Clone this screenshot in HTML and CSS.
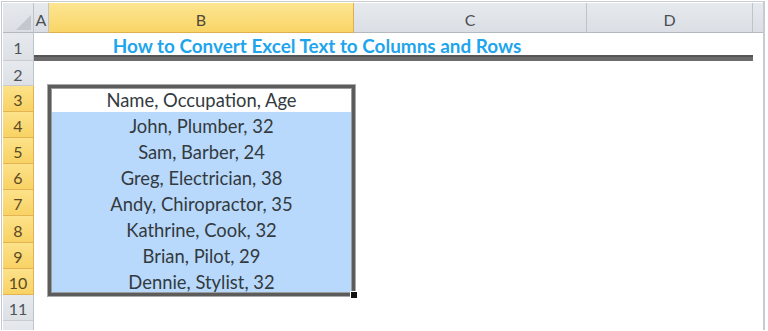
FILE: index.html
```html
<!DOCTYPE html>
<html>
<head>
<meta charset="utf-8">
<link rel="stylesheet" href="styles.css">
</head>
<body>
<div class="frame">
  <div class="sheet">
    <!-- header row -->
    <div class="hd corner"><svg width="31" height="29" viewBox="0 0 31 29"><polygon points="28,12 28,27 13,27" fill="#c3c8ce"/></svg></div>
    <div class="hd col">A</div>
    <div class="hd col sel">B</div>
    <div class="hd col">C</div>
    <div class="hd col">D</div>
    <div class="hd col last"></div>

    <!-- row 1 -->
    <div class="rh">1</div>
    <div class="c dl"></div>
    <div class="c title dl">How to Convert Excel Text to Columns and Rows</div>
    <div class="c dl"></div>
    <div class="c"></div>

    <!-- row 2 -->
    <div class="rh">2</div>
    <div class="c"></div><div class="c"></div><div class="c"></div><div class="c"></div><div class="c"></div>

    <!-- row 3 -->
    <div class="rh on">3</div>
    <div class="c"></div><div class="c txt">Name, Occupation, Age</div><div class="c"></div><div class="c"></div><div class="c"></div>

    <div class="rh on">4</div>
    <div class="c"></div><div class="c txt blue">John, Plumber, 32</div><div class="c"></div><div class="c"></div><div class="c"></div>

    <div class="rh on">5</div>
    <div class="c"></div><div class="c txt blue">Sam, Barber, 24</div><div class="c"></div><div class="c"></div><div class="c"></div>

    <div class="rh on">6</div>
    <div class="c"></div><div class="c txt blue">Greg, Electrician, 38</div><div class="c"></div><div class="c"></div><div class="c"></div>

    <div class="rh on">7</div>
    <div class="c"></div><div class="c txt blue">Andy, Chiropractor, 35</div><div class="c"></div><div class="c"></div><div class="c"></div>

    <div class="rh on">8</div>
    <div class="c"></div><div class="c txt blue">Kathrine, Cook, 32</div><div class="c"></div><div class="c"></div><div class="c"></div>

    <div class="rh on">9</div>
    <div class="c"></div><div class="c txt blue">Brian, Pilot, 29</div><div class="c"></div><div class="c"></div><div class="c"></div>

    <div class="rh on">10</div>
    <div class="c"></div><div class="c txt blue">Dennie, Stylist, 32</div><div class="c"></div><div class="c"></div><div class="c"></div>

    <div class="rh">11</div>
    <div class="c"></div><div class="c"></div><div class="c"></div><div class="c"></div><div class="c"></div>

    <div class="rh"></div>
    <div class="c"></div><div class="c"></div><div class="c"></div><div class="c"></div><div class="c"></div>

    <div class="selection"><span class="handle"></span></div>
  </div>
</div>
</body>
</html>
```

FILE: styles.css
```css
* { box-sizing: border-box; }
html, body { margin: 0; padding: 0; background: #ffffff; }
body { width: 768px; height: 331px; overflow: hidden; }

.frame {
  margin: 1px 0 0 1px;
  padding: 1px 0 0 1px;
  border-top: 1px solid #c9cdd3;
  border-left: 1px solid #c4c8ce;
  width: 764px;
  height: 329px;
  overflow: hidden;
  border-right: 2px solid #c7cbd1;
}

.sheet {
  position: relative;
  display: grid;
  grid-template-columns: 31px 15px 305px 233px 166px 10px;
  grid-template-rows: 30px 28px 25px repeat(9, 26.1px) 20px;
  font-family: Lato, "Open Sans", sans-serif;
}

.hd {
  background: linear-gradient(#e6e9ed, #dbdfe5);
  border-right: 1px solid #bfc4ca;
  border-bottom: 1px solid #b4b9c0;
  color: #4b4f55;
  font-size: 16px;
  display: flex;
  align-items: center;
  justify-content: center;
  padding-top: 3px;
}
.hd.corner { padding: 0; display: block; }
.hd.corner svg { display: block; }
.hd.sel {
  background: linear-gradient(#fde592, #f9d566);
  border-right-color: #e0b04c;
  border-bottom-color: #e0b04c;
  color: #50493a;
}
.hd.last { border-right: none; }

.rh {
  background: linear-gradient(#e6e9ed, #dde1e6);
  border-right: 1px solid #bfc4ca;
  border-bottom: 1px solid #c8ccd2;
  color: #4e535a;
  font-size: 16px;
  display: flex;
  align-items: center;
  justify-content: center;
  padding-top: 2px;
}
.rh.on {
  background: linear-gradient(#fde28a, #f8d264);
  border-right-color: #dfb14f;
  border-bottom-color: #e2b453;
  color: #5a4a25;
}

.c { background: #ffffff; }
.dl { border-bottom: 4px solid #6b6b6b; box-shadow: inset 0 -2px 0 #555; }

.title {
  grid-column: span 2;
  color: #1ea5ec;
  font-weight: bold;
  font-size: 18.9px;
  line-height: 22px;
  text-align: center;
  padding-top: 2px;
  padding-right: 2px;
  white-space: nowrap;
}

.txt {
  color: #333a40;
  font-size: 18.4px;
  text-align: center;
  display: flex;
  align-items: center;
  justify-content: center;
  padding-top: 1px;
  white-space: nowrap;
}
.blue { background: #b8d9fb; }

.selection {
  position: absolute;
  grid-column: 3 / 4;
  grid-row: 4 / 12;
  left: -1px;
  right: -1px;
  top: -1px;
  bottom: -1px;
  border: 3px solid #5c5c5c;
  outline: 1px solid #a9a9a9;
  box-shadow: inset 0 0 0 1px #9c9c9c;
}
.handle {
  position: absolute;
  right: -5px;
  bottom: -5px;
  width: 7px;
  height: 7px;
  background: #111;
  border-left: 1px solid #fff;
  border-top: 1px solid #fff;
}
```
